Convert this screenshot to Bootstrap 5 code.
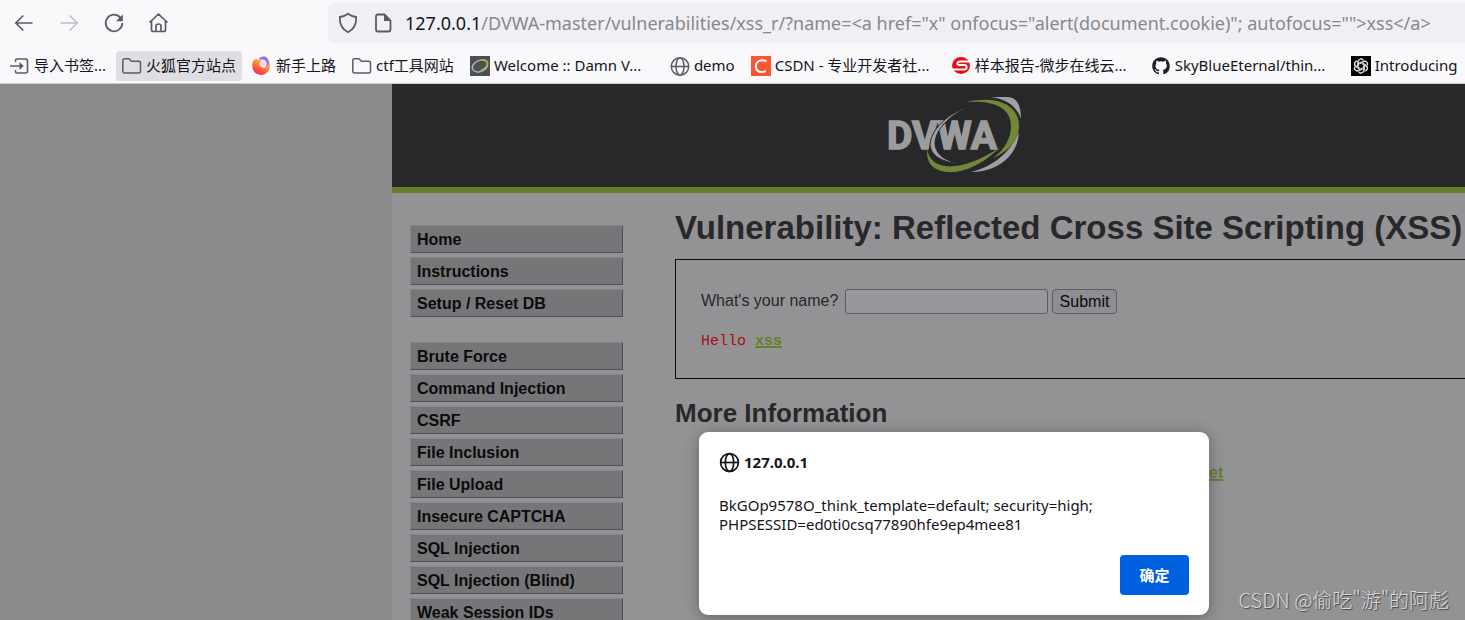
<!DOCTYPE html>
<html lang="zh-CN">
<head>
<meta charset="utf-8">
<meta name="viewport" content="width=device-width, initial-scale=1">
<title>Vulnerability: Reflected Cross Site Scripting (XSS)</title>
<link href="https://cdn.jsdelivr.net/npm/bootstrap@5.3.0/dist/css/bootstrap.min.css" rel="stylesheet">
<style>
  body { font-family: "Liberation Sans", sans-serif; font-size: 16px; background: #8b8b8d; }
  .chrome { background: #f9f9fb; border-bottom: 1px solid #cccccd; font-family: "Noto Sans", "Noto Sans CJK SC", sans-serif; color: #15141a; }
  .toolbar { height: 46px; padding: 3px 0 3px 12px; }
  .tools { gap: 21px; }
  .tool { width: 24px; height: 24px; color: #5b5b66; }
  .tool:disabled { color: #bdbdc2; opacity: 1; }
  .address { background: #f0f0f4; height: 40px; margin-left: 157px; border-radius: 5px 0 0 5px; padding-left: 8px; }
  .address svg { width: 24px; height: 24px; flex: none; color: #5b5b66; }
  .address .info { margin-left: 11px; }
  .url { font-size: 18px; line-height: 24px; color: #88888d; margin-left: 10px; }
  .url b { font-weight: 400; color: #15141a; }
  .bookmarks { height: 37px; padding: 5px 0 2px 4px; gap: 4px; font-size: 15px; line-height: 28px; }
  .bookmark { color: #15141a; height: 30px; padding: 0 6px; gap: 4px; border-radius: 4px; text-decoration: none; flex: none; }
  .bookmark span { padding-bottom: 2px; }
  .bookmark.hovered { background: #dedee3; }
  .bookmark.full { width: 196px; }
  .bookmark svg { width: 20px; height: 20px; flex: none; color: #5b5b66; }
  .gutter { width: 392px; flex: none; }
  .viewport { min-height: 0; }
  .site { background: #939395; min-width: 0; }
  .banner { background: #28282a; border-bottom: 6px solid #667f29; height: 109px; padding: 11px 0 0 52px; }
  .menu { width: 213px; margin-left: 18px; padding-top: 32px; gap: 4px; flex: none; }
  .menu a { height: 28px; background: #767678; border: 1px solid #858587; border-right-color: #4d5061; border-bottom-color: #4d5061; color: #0b0b0d; font-weight: 700; line-height: 28px; padding-left: 6px; text-decoration: none; }
  .menu .group { margin-top: 21px; }
  .page { margin-left: 52px; padding-top: 15px; color: #28282a; min-width: 0; }
  .page h1 { font-size: 33px; line-height: 40px; font-weight: 700; margin: 0 0 11px; white-space: nowrap; }
  .page h2 { font-size: 26px; line-height: 30px; font-weight: 700; margin: 19px 0 0; }
  .page a { color: #66802c; font-weight: 700; text-decoration-thickness: 2px; }
  .vuln { border: 1px solid #0b0b0d; border-right: 0; height: 120px; padding: 29px 25px; }
  .vuln label { width: 140px; line-height: 22px; padding-bottom: 2px; }
  .vuln input { width: 203px; height: 25px; background: #98989a; border: 1px solid #5c5b66; border-radius: 3px; padding: 0 4px; }
  .vuln button { width: 65px; height: 25px; background: #8d8d92; border: 1px solid #5c5b66; border-radius: 4px; padding: 0; line-height: 22px; color: #0b0b0d; }
  .reply { font-family: "Liberation Mono", monospace; font-size: 15px; line-height: 20px; margin: 18px 0 0; color: #a80d12; }
  .refs { margin: 33px 0 0; padding-left: 534px; line-height: 24px; list-style: none; }
  .prompt { top: 348px; left: 307px; width: 510px; height: 183px; background: #fff; border-radius: 9px; box-shadow: 0 2px 14px rgba(40,40,45,.45); padding: 19px 20px 20px; color: #15141a; font-family: "Noto Sans", "Noto Sans CJK SC", sans-serif; font-size: 15px; line-height: 19px; }
  .prompt .origin { line-height: 22px; gap: 4px; font-weight: 700; }
  .prompt .message { margin-top: 23px; }
  .prompt button { width: 69px; height: 40px; background: #0061e0; color: #fff; border: 0; border-radius: 4px; font-weight: 700; }
  .credit { right: 16px; bottom: 6px; font-family: "Noto Sans CJK SC", sans-serif; font-weight: 300; font-size: 20px; line-height: 28px; color: #d8d8da; text-shadow: 1px 1px 1px #444; }
</style>
</head>
<body>
<div class="vh-100 d-flex flex-column overflow-hidden position-relative">
  <header class="chrome">
    <div class="toolbar d-flex align-items-center">
      <div class="tools d-flex">
        <button class="tool btn p-0 border-0 d-flex" aria-label="Back"><svg viewBox="0 0 24 24" fill="none" stroke="currentColor" stroke-width="1.7"><path d="M20.500 12H4M11.300 4.500L3.800 12l7.500 7.500"/></svg></button>
        <button class="tool btn p-0 border-0 d-flex" aria-label="Forward" disabled><svg viewBox="0 0 24 24" fill="none" stroke="currentColor" stroke-width="1.500"><path d="M3.500 12H20M12.700 4.500l7.500 7.500-7.500 7.500"/></svg></button>
        <button class="tool btn p-0 border-0 d-flex" aria-label="Reload"><svg viewBox="0 0 24 24" fill="none" stroke="currentColor" stroke-width="1.700"><path d="M18.300 6.600A8.300 8.300 0 1 0 20.300 12"/><path d="M20.800 3.500v6.800H14z" fill="currentColor" stroke="none"/></svg></button>
        <button class="tool btn p-0 border-0 d-flex" aria-label="Home"><svg viewBox="0 0 24 24" fill="none" stroke="currentColor" stroke-width="1.700" stroke-linejoin="round"><path d="M2.500 11.500L11.500 3l9 8.500M4.500 10v8.500q0 2 2 2h10q2 0 2-2V10M9 20.500V15q0-2 2.500-2T14 15v5.500"/></svg></button>
      </div>
      <div class="address d-flex align-items-center flex-grow-1">
        <svg viewBox="0 0 24 24" fill="none" stroke="currentColor" stroke-width="1.800" stroke-linejoin="round"><path d="M12 2.800c2.400 1.900 5 2.800 8.200 3.200C20.500 13 18.500 18 12 21.200 5.500 18 3.500 13 3.800 6 7 5.600 9.600 4.700 12 2.800z"/></svg>
        <svg class="info" viewBox="0 0 24 24" fill="none" stroke="currentColor" stroke-width="1.800"><path d="M13.500 3.500H7Q5 3.500 5 5.500v13q0 2 2 2h10.500q2 0 2-2V9.500z"/><path d="M13 3v7h7z" fill="currentColor" stroke="none"/></svg>
        <div class="url text-nowrap"><b>127.0.0.1</b>/DVWA-master/vulnerabilities/xss_r/?name=&lt;a href="x" onfocus="alert(document.cookie)"; autofocus=""&gt;xss&lt;/a&gt;</div>
      </div>
    </div>
    <nav class="bookmarks d-flex text-nowrap" aria-label="Bookmarks">
      <a href="#" class="bookmark d-flex align-items-center"><svg viewBox="0 0 20 20" fill="none" stroke="currentColor" stroke-width="1.600"><path d="M5.500 6V4.500Q5.500 3 7 3h8.500Q17.500 3 17.500 5v10q0 2-2 2H7q-1.500 0-1.500-1.500V14M0 10h12"/><path d="M9.500 6l4.200 4-4.200 4z" fill="currentColor" stroke="none"/></svg><span>导入书签...</span></a>
      <a href="#" class="bookmark hovered d-flex align-items-center"><svg viewBox="0 0 20 20" fill="none" stroke="currentColor" stroke-width="1.500"><path d="M.8 15V4.500Q.8 2.800 2.500 2.800H7L9.500 5.300h7.200q1.800 0 1.800 1.700v8q0 2-2 2H2.800q-2 0-2-2z"/></svg><span>火狐官方站点</span></a>
      <a href="#" class="bookmark d-flex align-items-center"><svg viewBox="0 0 20 20"><defs><linearGradient id="fx" x1=".8" y1="0" x2=".2" y2="1"><stop offset="0" stop-color="#ffe14d"/><stop offset=".45" stop-color="#ff8a2a"/><stop offset="1" stop-color="#f5156c"/></linearGradient></defs><path fill="url(#fx)" d="M2 4l2-1.500L6 4c2-1 4-.5 5 0-3 1-4 3-3 5.500 2 3.500 7.500 2.500 8-1.500.3-2-.5-4-2-6 4.500 2.500 5 8 3 12-3.500 6.500-12.500 6.500-15.500.5C-.5 11 0 7 2 4z"/><path d="M6.500 3.500C8 .5 12.500-.5 15 2c3 3.500 2 8-1.500 9.800 2-3 1.500-6.500-1.500-8-1.500-.8-3.500-.8-5.500-.3z" fill="#9568f5"/><path d="M9 5c3-1.500 5.500 1 5 3.500-.5 2-3.500 3.500-5.500 1.500C7.500 8.500 7.500 6 9 5z" fill="#e9d8f5"/></svg><span>新手上路</span></a>
      <a href="#" class="bookmark d-flex align-items-center"><svg viewBox="0 0 20 20" fill="none" stroke="currentColor" stroke-width="1.500"><path d="M.8 15V4.500Q.8 2.800 2.500 2.800H7L9.500 5.300h7.200q1.800 0 1.800 1.700v8q0 2-2 2H2.800q-2 0-2-2z"/></svg><span>ctf工具网站</span></a>
      <a href="#" class="bookmark full d-flex align-items-center"><svg viewBox="0 0 20 20" fill="none"><path fill="#4b4f56" d="M0 0h20v20H0z"/><ellipse cx="10" cy="10" rx="8" ry="5.500" transform="rotate(-22 10 10)" stroke="#aab5ac" stroke-width="1.500"/><path d="M9 4.600c6-2.200 9 0 8.500 3-.6 3-4 5.500-7 7" stroke="#9bb52f" stroke-width="1.500"/></svg><span>Welcome :: Damn V...</span></a>
      <a href="#" class="bookmark d-flex align-items-center"><svg viewBox="0 0 20 20" fill="none" stroke="currentColor" stroke-width="1.500"><circle cx="10" cy="10.500" r="8.700"/><ellipse cx="10" cy="10.500" rx="4" ry="8.700"/><path d="M1.300 10.500h17.400"/></svg><span>demo</span></a>
      <a href="#" class="bookmark full d-flex align-items-center"><svg viewBox="0 0 20 20" fill="none"><path fill="#fc5531" d="M0 0h20v20H0z"/><path d="M15.500 5.200C9 2.600 4.800 6 4.800 10.500c0 5 5 6.800 10 4.600" stroke="#fff" stroke-width="2"/></svg><span>CSDN - 专业开发者社...</span></a>
      <a href="#" class="bookmark full d-flex align-items-center"><svg viewBox="0 0 20 20" fill="none"><ellipse cx="10" cy="9.500" rx="9" ry="8.500" fill="#e60f18"/><path d="M19 5.500H9.500c-4 0-4 3.500-1 3.500h4.500c3.500 0 3.500 4.500 0 4.500H1" stroke="#f9f9fb" stroke-width="2"/></svg><span>样本报告-微步在线云...</span></a>
      <a href="#" class="bookmark full d-flex align-items-center"><svg viewBox="0 0 16 16"><path fill="#1b1f23" d="M8 1C4 1 1 4.100 1 8c0 3.100 2 5.700 4.800 6.600.4.100.5-.1.500-.3v-1.400c-1.900.4-2.400-.8-2.400-.8-.3-.8-.8-1-.8-1-.6-.5.100-.5.100-.5.700.1 1.100.8 1.100.8.600 1.100 1.600.8 2 .6.100-.5.300-.8.500-.9-1.600-.2-3.200-.8-3.200-3.500 0-.8.300-1.400.7-1.900-.1-.2-.3-.9.100-1.900 0 0 .6-.2 2 .7a6.800 6.800 0 0 1 3.500 0c1.300-.9 1.900-.7 1.900-.7.400 1 .2 1.700.1 1.900.5.500.7 1.100.7 1.900 0 2.700-1.600 3.300-3.200 3.500.3.200.5.700.5 1.300v1.900c0 .2.100.4.500.3A7 7 0 0 0 15 8c0-3.900-3.100-7-7-7z"/></svg><span>SkyBlueEternal/thin...</span></a>
      <a href="#" class="bookmark d-flex align-items-center"><svg viewBox="0 0 20 20" fill="none"><path fill="#000" d="M0 0h20v20H0z"/><g stroke="#e8e8e8" stroke-width="1"><path id="petal" d="M7.600 10.500V5.700c0-3 3.500-3.800 5-1.700M7.600 7.500l4-2.300c2.500-1.300 5 .8 4.600 3.200"/><use href="#petal" transform="rotate(60 10 10)"/><use href="#petal" transform="rotate(120 10 10)"/><use href="#petal" transform="rotate(180 10 10)"/><use href="#petal" transform="rotate(240 10 10)"/><use href="#petal" transform="rotate(300 10 10)"/></g></svg><span>Introducing</span></a>
    </nav>
  </header>

  <div class="viewport d-flex flex-grow-1">
    <div class="gutter"></div>
    <div class="site flex-grow-1 position-relative">
      <div class="banner d-flex justify-content-center">
        <svg width="136" height="80" viewBox="-2 -2 136 80" role="img" aria-label="DVWA">
          <text x="-2" y="52" font-family="Roboto, sans-serif" font-weight="700" font-size="39" fill="#9c9c9f" stroke="#9c9c9f" stroke-width="1.500">DVWA</text>
          <path fill="#a0a0a2" stroke="#28282a" stroke-width="1" d="M85 8C62 14 43 30 41 47c0 11 12 20 36 20-18-1-30-8-31-20 0-16 18-32 39-39z"/>
          <path fill="#a0a0a2" d="M102 0h16c9 0 14 7 14 22C128 10 118 2 102 0zM130 35c-1 24-22 40-48 40 22-5 40-20 48-40z"/>
          <path fill="#728739" d="M77 5c30-7 53 2 53 24 0 14-11 26-26 32 12-9 18-20 18-32C122 10 104 3 77 5zM38 52c4 23 34 24 74-2C88 72 70 76 58 75 44 74 37 66 38 52z"/>
        </svg>
      </div>
      <div class="d-flex">
        <nav class="menu d-flex flex-column" aria-label="Main menu">
          <a href="#">Home</a>
          <a href="#">Instructions</a>
          <a href="#">Setup / Reset DB</a>
          <a href="#" class="group">Brute Force</a>
          <a href="#">Command Injection</a>
          <a href="#">CSRF</a>
          <a href="#">File Inclusion</a>
          <a href="#">File Upload</a>
          <a href="#">Insecure CAPTCHA</a>
          <a href="#">SQL Injection</a>
          <a href="#">SQL Injection (Blind)</a>
          <a href="#">Weak Session IDs</a>
        </nav>
        <main class="page flex-grow-1">
          <h1>Vulnerability: Reflected Cross Site Scripting (XSS)</h1>
          <div class="vuln">
            <form class="d-flex gap-1 align-items-center" onsubmit="return false">
              <label for="name">What's your name?</label>
              <input id="name" type="text">
              <button type="submit">Submit</button>
            </form>
            <p class="reply">Hello <a href="#">xss</a></p>
          </div>
          <h2>More Information</h2>
          <ul class="refs"><li><a href="#">et</a></li></ul>
        </main>
      </div>
      <div class="prompt position-absolute d-flex flex-column" role="dialog" aria-label="127.0.0.1">
        <div class="origin d-flex align-items-center"><svg width="21" height="21" viewBox="0 0 20 20" fill="none" stroke="currentColor" stroke-width="1.600"><circle cx="10" cy="10" r="8.500"/><ellipse cx="10" cy="10" rx="4" ry="8.500"/><path d="M1.500 10h17"/></svg>127.0.0.1</div>
        <div class="message">BkGOp9578O_think_template=default; security=high;<br>PHPSESSID=ed0ti0csq77890hfe9ep4mee81</div>
        <button type="button" class="mt-auto ms-auto">确定</button>
      </div>
    </div>
  </div>
  <div class="credit position-absolute">CSDN @偷吃"游"的阿彪</div>
</div>
<script src="https://cdn.jsdelivr.net/npm/bootstrap@5.3.0/dist/js/bootstrap.bundle.min.js"></script>
</body>
</html>
